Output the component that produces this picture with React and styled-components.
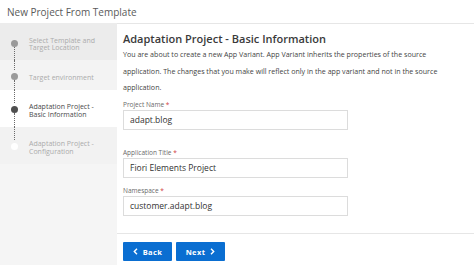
import React from "react";
import styled, { createGlobalStyle } from "styled-components";

const Global = createGlobalStyle`
  html, body { margin: 0; padding: 0; background: #fff; }
  body { font-family: "Open Sans", "Noto Sans", sans-serif; overflow: hidden; }
  * { box-sizing: border-box; }
`;

const Page = styled.div`
  width: 474px;
  height: 265px;
  display: flex;
  flex-direction: column;
  background: #fff;
`;

const Header = styled.div`
  height: 23px;
  display: flex;
  align-items: center;
  padding-left: 7px;
  font-size: 10px;
  color: #5a5a5a;
`;

const Body = styled.div`
  flex: 1;
  display: flex;
  min-height: 0;
`;

const Sidebar = styled.div`
  width: 117px;
  background: #f5f5f5;
  display: flex;
  flex-direction: column;
`;

const Step = styled.div`
  display: flex;
  align-items: stretch;
  background: ${(p) => p.$bg};
`;

const Rail = styled.div`
  width: 29px;
  padding-left: 11px;
  display: flex;
  flex-direction: column;
  align-items: flex-start;
`;

const Segment = styled.div`
  flex: 1;
  margin-left: 3px;
  border-left: 1px dotted ${(p) => (p.$hidden ? "transparent" : "#6a6a6a")};
`;

const Dot = styled.div`
  width: 7px;
  height: 7px;
  border-radius: 50%;
  margin-top: 3px;
  background: ${(p) => p.$color};
`;

const StepText = styled.div`
  padding: 13.5px 0 8.5px 0;
  font-size: 7px;
  line-height: 7.5px;
  color: ${(p) => (p.$active ? "#4a4a4a" : "#ababab")};
`;

const Main = styled.div`
  flex: 1;
  display: flex;
  flex-direction: column;
  border-top: 1px solid #e6e6e6;
  background: #fff;
`;

const Content = styled.div`
  flex: 1;
  padding: 8px 0 0 6px;
`;

const Title = styled.div`
  font-size: 11px;
  line-height: 14px;
  font-weight: 600;
  color: #3a3a3a;
`;

const Description = styled.p`
  margin: 0 0 4px 0;
  width: 336px;
  font-size: 7.1px;
  line-height: 16.5px;
  color: #444;
`;

const Field = styled.div`
  margin-bottom: ${(p) => p.$gap}px;
`;

const Label = styled.div`
  font-size: 6.5px;
  line-height: 9px;
  margin-bottom: 1px;
  color: #6a6a6a;
`;

const Req = styled.span`
  color: #d04343;
`;

const Input = styled.div`
  width: 225px;
  height: 20px;
  border: 1px solid #dcdcdc;
  background: #fff;
  display: flex;
  align-items: center;
  padding-left: 6px;
  font-size: 8.5px;
  color: #333;
`;

const Footer = styled.div`
  border-top: 1px solid #e6e6e6;
  padding: 8px 0 4px 6px;
  display: flex;
  gap: 4px;
`;

const Button = styled.button`
  width: 49px;
  height: 19px;
  border: none;
  border-radius: 1px;
  background: #0a6ed1;
  color: #fff;
  font-family: "Open Sans", "Noto Sans", sans-serif;
  font-size: 7.5px;
  font-weight: 700;
  letter-spacing: 0.4px;
  display: flex;
  align-items: center;
  justify-content: center;
  gap: 5px;
  padding: 0;
`;

const Chevron = ({ dir }) => (
  <svg width="5" height="7" viewBox="0 0 5 7">
    <polyline
      points={dir === "left" ? "4,0.8 1.3,3.5 4,6.2" : "1,0.8 3.7,3.5 1,6.2"}
      fill="none"
      stroke="#fff"
      strokeWidth="1.4"
    />
  </svg>
);

const steps = [
  { lines: ["Select Template and", "Target Location"], bg: "#ececec", dot: "#9a9a9a" },
  { lines: ["Target environment"], bg: "#f3f3f3", dot: "#9a9a9a" },
  { lines: ["Adaptation Project -", "Basic Information"], bg: "#ffffff", dot: "#4f4f4f", active: true },
  { lines: ["Adaptation Project -", "Configuration"], bg: "#f2f2f2", dot: "#ffffff" },
];

const fields = [
  { label: "Project Name", value: "adapt.blog", gap: 18 },
  { label: "Application Title", value: "Fiori Elements Project", gap: 8 },
  { label: "Namespace", value: "customer.adapt.blog", gap: 0 },
];

export default function App() {
  return (
    <Page>
      <Global />
      <Header>New Project From Template</Header>
      <Body>
        <Sidebar>
          {steps.map((s, i) => (
            <Step key={i} $bg={s.bg}>
              <Rail>
                <Segment $hidden={i === 0} />
                <Dot $color={s.dot} />
                <Segment $hidden={i === steps.length - 1} />
              </Rail>
              <StepText $active={s.active}>
                {s.lines.map((l, j) => (
                  <div key={j}>{l}</div>
                ))}
              </StepText>
            </Step>
          ))}
        </Sidebar>
        <Main>
          <Content>
            <Title>Adaptation Project - Basic Information</Title>
            <Description>
              You are about to create a new App Variant. App Variant inherits the properties of the source
              application. The changes that you make will reflect only in the app variant and not in the source
              application.
            </Description>
            {fields.map((f) => (
              <Field key={f.label} $gap={f.gap}>
                <Label>
                  {f.label} <Req>*</Req>
                </Label>
                <Input>{f.value}</Input>
              </Field>
            ))}
          </Content>
          <Footer>
            <Button>
              <Chevron dir="left" />
              Back
            </Button>
            <Button>
              Next
              <Chevron dir="right" />
            </Button>
          </Footer>
        </Main>
      </Body>
    </Page>
  );
}
